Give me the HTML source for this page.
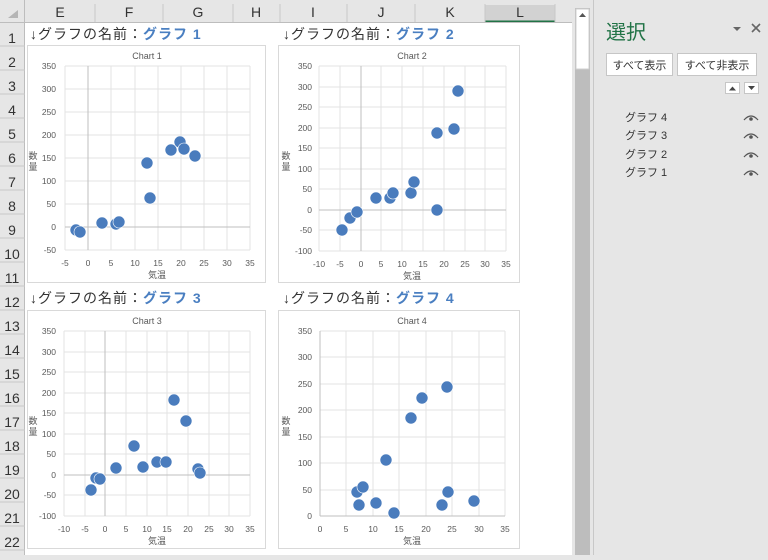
<!DOCTYPE html>
<html><head><meta charset="utf-8"><style>
body{margin:0;width:768px;height:555px;overflow:hidden;background:#e6e6e6;font-family:"Liberation Sans","Noto Sans CJK JP",sans-serif}
svg text{font-family:"Liberation Sans","Noto Sans CJK JP",sans-serif}
</style></head><body>
<svg width="768" height="555" viewBox="0 0 768 555" xmlns="http://www.w3.org/2000/svg">
<rect x="0" y="0" width="572" height="555" fill="#fff"/>
<rect x="0" y="0" width="572" height="22" fill="#e6e6e6"/>
<rect x="0" y="0" width="25" height="555" fill="#e6e6e6"/>
<rect x="485" y="5" width="70" height="17" fill="#d2d2d2"/>
<line x1="485" y1="21.5" x2="555" y2="21.5" stroke="#217346" stroke-width="2"/>
<path d="M95 4V22M163 4V22M233 4V22M280 4V22M347 4V22M415 4V22M485 4V22M555 4V22" stroke="#c8c8c8"/>
<path d="M0 22.5H572M24.5 0V555" stroke="#bdbdbd"/>
<path d="M0 46H25M0 70H25M0 94H25M0 118H25M0 142H25M0 166H25M0 190H25M0 214H25M0 238H25M0 262H25M0 286H25M0 310H25M0 334H25M0 358H25M0 382H25M0 406H25M0 430H25M0 454H25M0 478H25M0 502H25M0 526H25M0 550H25" stroke="#c8c8c8"/>
<path d="M18 10L8 18H18Z" fill="#b5b5b5"/>
<g font-size="14" fill="#333" text-anchor="middle">
<text x="60" y="17">E</text><text x="129" y="17">F</text><text x="198" y="17">G</text><text x="256" y="17">H</text><text x="313" y="17">I</text><text x="381" y="17">J</text><text x="450" y="17">K</text><text x="520" y="17">L</text>
</g>
<g font-size="14" fill="#333" text-anchor="middle">
<text x="12" y="43">1</text><text x="12" y="67">2</text><text x="12" y="91">3</text><text x="12" y="115">4</text><text x="12" y="139">5</text><text x="12" y="163">6</text><text x="12" y="187">7</text><text x="12" y="211">8</text><text x="12" y="235">9</text><text x="12" y="259">10</text><text x="12" y="283">11</text><text x="12" y="307">12</text><text x="12" y="331">13</text><text x="12" y="355">14</text><text x="12" y="379">15</text><text x="12" y="403">16</text><text x="12" y="427">17</text><text x="12" y="451">18</text><text x="12" y="475">19</text><text x="12" y="499">20</text><text x="12" y="523">21</text><text x="12" y="547">22</text>
</g>
<g font-size="14" fill="#333" letter-spacing="1">
<text x="30" y="39">↓グラフの名前：<tspan fill="#4a7fc1" font-weight="bold">グラフ 1</tspan></text>
<text x="283" y="39">↓グラフの名前：<tspan fill="#4a7fc1" font-weight="bold">グラフ 2</tspan></text>
<text x="30" y="303">↓グラフの名前：<tspan fill="#4a7fc1" font-weight="bold">グラフ 3</tspan></text>
<text x="283" y="303">↓グラフの名前：<tspan fill="#4a7fc1" font-weight="bold">グラフ 4</tspan></text>
</g>
<g fill="#fff" stroke="#d9d9d9">
<rect x="27.5" y="45.5" width="238" height="237"/>
<rect x="278.5" y="45.5" width="241" height="237"/>
<rect x="27.5" y="310.5" width="238" height="238"/>
<rect x="278.5" y="310.5" width="241" height="238"/>
</g>
<g stroke="#e3e3e3" fill="none">
<path d="M65 66V250M88 66V250M111 66V250M135 66V250M158 66V250M181 66V250M204 66V250M227 66V250M250 66V250M65 66H250M65 89H250M65 112H250M65 135H250M65 158H250M65 181H250M65 204H250M65 227H250M65 250H250"/>
<path d="M319 66V251M340 66V251M361 66V251M381 66V251M402 66V251M423 66V251M444 66V251M465 66V251M485 66V251M506 66V251M319 66H506M319 87H506M319 107H506M319 128H506M319 148H506M319 169H506M319 189H506M319 210H506M319 230H506M319 251H506"/>
<path d="M64 331V516M85 331V516M105 331V516M126 331V516M147 331V516M167 331V516M188 331V516M209 331V516M229 331V516M250 331V516M64 331H250M64 352H250M64 372H250M64 393H250M64 413H250M64 434H250M64 454H250M64 475H250M64 495H250M64 516H250"/>
<path d="M320 331V516M346 331V516M373 331V516M399 331V516M426 331V516M452 331V516M479 331V516M505 331V516M320 331H505M320 357H505M320 384H505M320 410H505M320 437H505M320 463H505M320 490H505M320 516H505"/>
</g>
<g stroke="#bfbfbf">
<path d="M88 66V250M65 227H250"/>
<path d="M361 66V251M319 210H506"/>
<path d="M105 331V516M64 475H250"/>
<path d="M320 331V516M320 516H505"/>
</g>
<g font-size="9" fill="#595959" text-anchor="middle">
<text x="147" y="59">Chart 1</text><text x="412" y="59">Chart 2</text><text x="147" y="324">Chart 3</text><text x="412" y="324">Chart 4</text>
<text x="157" y="278">気温</text><text x="412" y="279">気温</text><text x="157" y="544">気温</text><text x="412" y="544">気温</text>
<text x="33" y="159">数</text><text x="33" y="170">量</text>
<text x="286" y="159">数</text><text x="286" y="170">量</text>
<text x="33" y="424">数</text><text x="33" y="435">量</text>
<text x="286" y="424">数</text><text x="286" y="435">量</text>
</g>
<g font-size="8.5" fill="#595959" text-anchor="end">
<text x="56" y="69">350</text><text x="56" y="92">300</text><text x="56" y="115">250</text><text x="56" y="138">200</text><text x="56" y="161">150</text><text x="56" y="184">100</text><text x="56" y="207">50</text><text x="56" y="230">0</text><text x="56" y="253">-50</text>
<text x="312" y="69">350</text><text x="312" y="90">300</text><text x="312" y="110">250</text><text x="312" y="131">200</text><text x="312" y="151">150</text><text x="312" y="172">100</text><text x="312" y="192">50</text><text x="312" y="213">0</text><text x="312" y="233">-50</text><text x="312" y="254">-100</text>
<text x="56" y="334">350</text><text x="56" y="355">300</text><text x="56" y="375">250</text><text x="56" y="396">200</text><text x="56" y="416">150</text><text x="56" y="437">100</text><text x="56" y="457">50</text><text x="56" y="478">0</text><text x="56" y="498">-50</text><text x="56" y="519">-100</text>
<text x="312" y="334">350</text><text x="312" y="360">300</text><text x="312" y="387">250</text><text x="312" y="413">200</text><text x="312" y="440">150</text><text x="312" y="466">100</text><text x="312" y="493">50</text><text x="312" y="519">0</text>
</g>
<g font-size="8.5" fill="#595959" text-anchor="middle">
<text x="65" y="266">-5</text><text x="88" y="266">0</text><text x="111" y="266">5</text><text x="135" y="266">10</text><text x="158" y="266">15</text><text x="181" y="266">20</text><text x="204" y="266">25</text><text x="227" y="266">30</text><text x="250" y="266">35</text>
<text x="319" y="267">-10</text><text x="340" y="267">-5</text><text x="361" y="267">0</text><text x="381" y="267">5</text><text x="402" y="267">10</text><text x="423" y="267">15</text><text x="444" y="267">20</text><text x="465" y="267">25</text><text x="485" y="267">30</text><text x="506" y="267">35</text>
<text x="64" y="532">-10</text><text x="85" y="532">-5</text><text x="105" y="532">0</text><text x="126" y="532">5</text><text x="147" y="532">10</text><text x="167" y="532">15</text><text x="188" y="532">20</text><text x="209" y="532">25</text><text x="229" y="532">30</text><text x="250" y="532">35</text>
<text x="320" y="532">0</text><text x="346" y="532">5</text><text x="373" y="532">10</text><text x="399" y="532">15</text><text x="426" y="532">20</text><text x="452" y="532">25</text><text x="479" y="532">30</text><text x="505" y="532">35</text>
</g>
<g fill="#4a7cbd" stroke="#fff" stroke-width="0.6">
<circle cx="76" cy="230" r="6"/><circle cx="80" cy="232" r="6"/><circle cx="102" cy="223" r="6"/><circle cx="116" cy="224" r="6"/><circle cx="119" cy="222" r="6"/><circle cx="147" cy="163" r="6"/><circle cx="150" cy="198" r="6"/><circle cx="171" cy="150" r="6"/><circle cx="180" cy="142" r="6"/><circle cx="184" cy="149" r="6"/><circle cx="195" cy="156" r="6"/>
<circle cx="342" cy="230" r="6"/><circle cx="350" cy="218" r="6"/><circle cx="357" cy="212" r="6"/><circle cx="376" cy="198" r="6"/><circle cx="390" cy="198" r="6"/><circle cx="393" cy="193" r="6"/><circle cx="411" cy="193" r="6"/><circle cx="414" cy="182" r="6"/><circle cx="437" cy="210" r="6"/><circle cx="437" cy="133" r="6"/><circle cx="454" cy="129" r="6"/><circle cx="458" cy="91" r="6"/>
<circle cx="91" cy="490" r="6"/><circle cx="96" cy="478" r="6"/><circle cx="100" cy="479" r="6"/><circle cx="116" cy="468" r="6"/><circle cx="134" cy="446" r="6"/><circle cx="143" cy="467" r="6"/><circle cx="157" cy="462" r="6"/><circle cx="166" cy="462" r="6"/><circle cx="174" cy="400" r="6"/><circle cx="186" cy="421" r="6"/><circle cx="198" cy="469" r="6"/><circle cx="200" cy="473" r="6"/>
<circle cx="357" cy="492" r="6"/><circle cx="359" cy="505" r="6"/><circle cx="363" cy="487" r="6"/><circle cx="376" cy="503" r="6"/><circle cx="386" cy="460" r="6"/><circle cx="394" cy="513" r="6"/><circle cx="411" cy="418" r="6"/><circle cx="422" cy="398" r="6"/><circle cx="442" cy="505" r="6"/><circle cx="447" cy="387" r="6"/><circle cx="448" cy="492" r="6"/><circle cx="474" cy="501" r="6"/>
</g>
<rect x="572" y="0" width="20" height="555" fill="#e6e6e6"/>
<rect x="575" y="8" width="15" height="547" fill="#bdbdbd"/>
<rect x="576" y="9" width="13" height="60" fill="#fff" stroke="#d0d0d0"/>
<path d="M579 17L582.5 13L586 17Z" fill="#555"/>
<line x1="593.5" y1="0" x2="593.5" y2="555" stroke="#c8c8c8"/>
<text x="606" y="39" font-size="20" fill="#217346">選択</text>
<path d="M733 27L741 27L737 31Z" fill="#666"/>
<path d="M752 24L760 32M760 24L752 32" stroke="#666" stroke-width="1.6"/>
<rect x="606.5" y="53.5" width="66" height="22" fill="#fff" stroke="#c6c6c6"/>
<rect x="677.5" y="53.5" width="79" height="22" fill="#fff" stroke="#c6c6c6"/>
<text x="639.5" y="69" font-size="11" fill="#333" text-anchor="middle">すべて表示</text>
<text x="717" y="69" font-size="11" fill="#333" text-anchor="middle">すべて非表示</text>
<rect x="725.5" y="82.5" width="14" height="11" fill="#fff" stroke="#c6c6c6"/>
<rect x="744.5" y="82.5" width="14" height="11" fill="#fff" stroke="#c6c6c6"/>
<path d="M729 90.5L732.5 86.5L736 90.5Z" fill="#444"/>
<path d="M748 86L755 86L751.5 90Z" fill="#444"/>
<g font-size="11" fill="#333">
<text x="625" y="121">グラフ 4</text><text x="625" y="139">グラフ 3</text><text x="625" y="158">グラフ 2</text><text x="625" y="176">グラフ 1</text>
</g>
<g fill="none" stroke="#555" stroke-width="1.3">
<path d="M744 120Q751 112 758 120"/><path d="M744 138Q751 130 758 138"/><path d="M744 157Q751 149 758 157"/><path d="M744 175Q751 167 758 175"/>
</g>
<g fill="#555"><circle cx="751" cy="119" r="1.8"/><circle cx="751" cy="137" r="1.8"/><circle cx="751" cy="156" r="1.8"/><circle cx="751" cy="174" r="1.8"/></g>
</svg>
</body></html>
